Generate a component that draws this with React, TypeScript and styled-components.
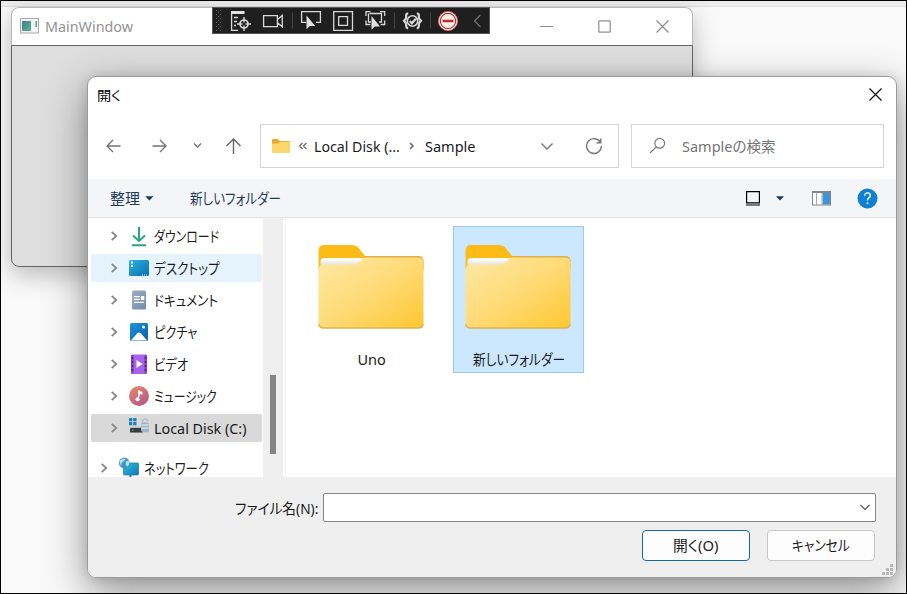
import React, { useLayoutEffect, useRef, useState } from 'react';
import styled, { createGlobalStyle } from 'styled-components';

const GlobalStyle = createGlobalStyle`
  * { box-sizing: border-box; }
  body { margin: 0; overflow: hidden; }
  svg { display: block; flex: none; }
`;

/* ---------- text that is condensed to a set width ---------- */

const FitBox = styled.span<{ $w: number; $size: number; $color: string; $ml: number }>`
  display: inline-flex;
  flex: none;
  width: ${p => p.$w}px;
  margin-left: ${p => p.$ml}px;
  font-size: ${p => p.$size}px;
  line-height: 20px;
  height: 20px;
  color: ${p => p.$color};
  white-space: pre;
`;
const FitInner = styled.span`
  flex: none;
  transform-origin: 0 50%;
  font-feature-settings: 'palt';
`;

type FitProps = { text: string; w: number; size?: number; color?: string; ml?: number };

function Fit({ text, w, size = 14.5, color = '#1b1b1b', ml = 0 }: FitProps) {
  const ref = useRef<HTMLSpanElement>(null);
  const [scale, setScale] = useState(1);
  useLayoutEffect(() => {
    if (ref.current && ref.current.offsetWidth) setScale(w / ref.current.offsetWidth);
  }, [text, w, size]);
  return (
    <FitBox $w={w} $size={size} $color={color} $ml={ml}>
      <FitInner ref={ref} style={{ transform: `scaleX(${scale})` }}>{text}</FitInner>
    </FitBox>
  );
}

/* ---------- desktop ---------- */

const Desktop = styled.div`
  position: relative;
  width: 907px;
  height: 594px;
  overflow: hidden;
  border: 1px solid #000;
  background: #f9f9f9;
  font-family: 'Noto Sans', 'Noto Sans CJK JP', sans-serif;
`;
const BackStrip = styled.div`
  height: 6px;
  background: #efecef;
  border-bottom: 1px solid #dedede;
`;

const MainWindow = styled.section`
  position: absolute;
  left: 10px;
  top: 6px;
  width: 682px;
  height: 260px;
  display: flex;
  flex-direction: column;
  border-radius: 8px;
  background: #fff;
  box-shadow: 0 8px 24px rgba(0, 0, 0, 0.25);
`;
const MainTitle = styled.header`
  height: 38px;
  flex: none;
  display: flex;
  align-items: center;
  padding: 0 23px 1px 8px;
  border: 1px solid #b8b8b8;
  border-bottom: 0;
  border-radius: 8px 8px 0 0;
`;
const Spacer = styled.div`
  flex: 1;
`;
const CaptionButtons = styled.div`
  display: flex;
  gap: 45px;
`;
const MainBody = styled.div`
  flex: 1;
  background: #dedede;
  border: 1px solid #666;
  border-radius: 0 0 8px 8px;
`;

const DebugBar = styled.div`
  position: absolute;
  left: 211px;
  top: 6px;
  width: 278px;
  height: 27px;
  background: #1f1f1f;
  border: 1px solid #555;
  display: flex;
`;

/* ---------- dialog ---------- */

const Dialog = styled.section`
  position: absolute;
  left: 86px;
  top: 75px;
  width: 810px;
  height: 502px;
  display: flex;
  flex-direction: column;
  border: 1px solid #9b9b9b;
  border-radius: 9px;
  background: #fff;
  background-clip: padding-box;
  overflow: hidden;
`;
const DialogShadow = styled.div`
  position: absolute;
  left: 86px;
  top: 75px;
  width: 810px;
  height: 502px;
  border-radius: 9px;
  box-shadow: 0 14px 42px rgba(0, 0, 0, 0.42), 0 0 12px rgba(0, 0, 0, 0.12);
`;
const DialogTitle = styled.header`
  height: 35px;
  flex: none;
  display: flex;
  align-items: center;
  padding: 0 14px 0 9px;
`;
const NavRow = styled.div`
  height: 67px;
  flex: none;
  display: flex;
  align-items: center;
  padding: 0 12px 0 17px;
`;
const Field = styled.div<{ $w: number; $ml: number; $pl: number }>`
  width: ${p => p.$w}px;
  margin-left: ${p => p.$ml}px;
  padding-left: ${p => p.$pl}px;
  height: 44px;
  border: 1px solid #d4d4d4;
  display: flex;
  align-items: center;
  flex: none;
`;
const CommandBar = styled.div`
  height: 39px;
  flex: none;
  display: flex;
  align-items: center;
  padding: 0 18px 0 22px;
  background: #f4f5f7;
  border-bottom: 1px solid #e4e4e4;
`;
const Gap = styled.div<{ $w: number }>`
  flex: none;
  width: ${p => p.$w}px;
`;
const Body = styled.div`
  display: flex;
  height: 259px;
  flex: none;
  overflow: hidden;
`;
const Tree = styled.nav`
  width: 175px;
  padding: 4px 1px 0 3px;
  display: flex;
  flex-direction: column;
  gap: 4px;
`;
const TreeItem = styled.div<{ $bg?: string; $root?: boolean }>`
  flex: none;
  height: 28px;
  display: flex;
  align-items: center;
  border-radius: 2px;
  padding-left: ${p => (p.$root ? 9 : 19)}px;
  margin-top: ${p => (p.$root ? 8 : 0)}px;
  background: ${p => p.$bg ?? 'transparent'};
`;
const ItemIcon = styled.div`
  width: 22px;
  height: 22px;
  margin: 0 4px 0 10px;
`;
const Track = styled.div`
  width: 20px;
  background: #efefef;
  padding: 157px 0 0 7px;
`;
const Thumb = styled.div`
  width: 6px;
  height: 79px;
  background: #858585;
`;
const Files = styled.div`
  flex: 1;
  display: flex;
  align-items: flex-start;
  gap: 16px;
  padding: 8px 0 0 20px;
  margin-left: 2px;
  border-left: 1px solid #f3f3f3;
`;
const Tile = styled.div<{ $selected?: boolean }>`
  width: 131px;
  height: 147px;
  display: flex;
  flex-direction: column;
  align-items: center;
  padding-top: 18px;
  gap: 20px;
  border: 1px solid ${p => (p.$selected ? '#99c9ef' : 'transparent')};
  background: ${p => (p.$selected ? '#cce8ff' : 'transparent')};
  & > svg { margin-right: 2px; }
`;
const Footer = styled.footer`
  flex: 1;
  background: #efefef;
  padding: 16px 20px 0 0;
`;
const NameRow = styled.div`
  display: flex;
  align-items: center;
  justify-content: flex-end;
`;
const Combo = styled.div`
  width: 553px;
  height: 29px;
  margin-left: 5px;
  border: 1px solid #868686;
  border-radius: 2px;
  background: #fff;
  display: flex;
  align-items: center;
  justify-content: flex-end;
  padding-right: 5px;
`;
const Buttons = styled.div`
  display: flex;
  justify-content: flex-end;
  gap: 17px;
  margin: 8px 1px 0 0;
`;
const Button = styled.button<{ $primary?: boolean }>`
  width: 108px;
  height: 31px;
  padding: 0 0 2px;
  display: flex;
  align-items: center;
  justify-content: center;
  font-family: inherit;
  background: #fdfdfd;
  border-radius: 4px;
  border: 1px solid ${p => (p.$primary ? '#1568a8' : '#c8c8c8')};
`;
const Grip = styled.svg`
  position: absolute;
  right: 2px;
  bottom: 1px;
`;

/* ---------- icons ---------- */

const CloseIcon = ({ color }: { color: string }) => (
  <svg width="13" height="13" viewBox="0 0 13 13" stroke={color} strokeWidth="1.25"><path d="M.5.5l12 12M12.5.5l-12 12" /></svg>
);

const Chevron = () => (
  <svg width="8" height="10" viewBox="0 0 8 10" fill="none" stroke="#858585" strokeWidth="1.700"><path d="M1.700.8L6.300 5 1.700 9.200" /></svg>
);

const AppIcon = () => (
  <svg width="19" height="16" viewBox="0 0 19 16">
    <defs><linearGradient id="app" x1="0" y1="0" x2="1" y2="1"><stop stopColor="#3d7f96" /><stop offset="1" stopColor="#5fb489" /></linearGradient></defs>
    <rect x=".5" y=".5" width="18" height="14.5" fill="#f4f4f4" stroke="#a6abae" />
    <rect x="2" y="3" width="9" height="10" fill="url(#app)" />
    <rect x="15.5" y="3" width="1.3" height="6" fill="#5b8796" />
  </svg>
);

const DebugIcons = () => (
  <svg width="276" height="25" viewBox="213 8 276 25" fill="none" stroke="#d8d8d8" strokeWidth="1.3">
    <g stroke="#6b6b6b" strokeWidth="1.1" strokeDasharray="1 3">
      <path d="M216.500 10v22M220.500 10v22" /><path d="M218.500 12v20" />
    </g>
    <path d="M231 12.500h13.500" stroke="#e2e2e2" strokeWidth="3" />
    <path d="M231.600 13v17.300h6.500M234 17.500h4M234 21.500h3M234 25.500h2" />
    <circle cx="244" cy="24" r="4" strokeWidth="1.700" />
    <path d="M244 17v5.500M244 25.500v5.500M237 24h5.500M245.500 24h5.500" strokeWidth="1.400" />
    <path d="M263.600 15.600h13.800v11h-13.800zM277.500 19.500l4.800-4v11.300l-4.800-4" />
    <path d="M292.500 12.500v16M394.500 12.500v16M430.500 12.500v16" stroke="#464646" strokeWidth="1" />
    <path d="M306 22.300h-4.400V11.700h18.800v10.600h-4.500" />
    <path d="M306.500 15.500v13.700l3.400-3.300h5.300z" fill="#e2e2e2" stroke="none" />
    <path d="M333.700 11.700h18.800v18.600h-18.800zM338.700 16.700h8.800v8.700h-8.800z" />
    <path d="M369.500 13.500h12v8.500h-2.500M371 22h-2.500v-8.500M366 16v-4.300h4.500M380 11.700h4.700V16M384.700 20.500v4h-4M366 20.500v4h4.500" />
    <path d="M371.500 16v13.700l3.300-3.200h5.200z" fill="#e2e2e2" stroke="none" />
    <circle cx="412.500" cy="21" r="5.200" strokeWidth="1.600" />
    <path d="M409.700 21l2.200 2.300 4-4.500" strokeWidth="2.200" />
    <path d="M408.200 13.300c-3 0-1.700 3-2.200 5.200l-2 2.200 2 2.500c.5 2-.8 5 2.200 5.200M416.800 13.300c3 0 1.700 3 2.200 5.200l2 2.200-2 2.500c-.5 2 .8 5-2.200 5.200" strokeWidth="2.200" />
    <circle cx="448" cy="21" r="9.500" fill="#fff" stroke="#d96b62" strokeWidth="1" />
    <circle cx="448" cy="21" r="7.700" fill="#fdf0ef" stroke="#b63a32" strokeWidth="1.200" />
    <path d="M442.500 21h11" stroke="#b5332b" strokeWidth="2.600" />
    <path d="M480.500 15l-6 6 6 6" stroke="#747474" strokeWidth="1.200" />
  </svg>
);

const Folder = () => (
  <svg width="106" height="84" viewBox="0 0 106 84">
    <defs>
      <linearGradient id="fold" x1="0" y1="0" x2="1" y2="1"><stop stopColor="#ffe9a6" /><stop offset=".5" stopColor="#ffdb77" /><stop offset="1" stopColor="#ffc62f" /></linearGradient>
      <linearGradient id="paper" x1="0" y1="0" x2="0" y2="1"><stop offset=".1" stopColor="#fff" /><stop offset=".75" stopColor="#dedbd0" /></linearGradient>
    </defs>
    <path d="M.5 24V5a5 5 0 015-5H33.500q4.500 0 7 2.800L47 11H100.500a5 5 0 015 5v10z" fill="#fcbb16" />
    <path d="M45 11.200H100.500a5 5 0 015 4.800v7z" fill="#d9ac4f" />
    <path d="M2.500 24V16.500q0-3.500 4-3.500H46l-6 8H8z" fill="url(#paper)" />
    <path d="M5.500 19.500H34q4.500 0 7-2.500l4-3.300q1.700-1.300 4-1.300H100.500a5 5 0 015 5V78a5 5 0 01-5 5H5.500a5 5 0 01-5-5V24.500a5 5 0 015-5z" fill="url(#fold)" />
    <path d="M.7 79q.8 4 4.800 4H100.500q4 0 4.800-4" fill="none" stroke="#e0b24d" strokeWidth="1.300" />
  </svg>
);

const SmallFolder = () => (
  <svg width="18" height="14" viewBox="0 0 18 14">
    <path d="M0 1.300Q0 0 1.300 0H5.500L7.500 2H16.700Q18 2 18 3.300V8H0z" fill="#e6a92c" />
    <path d="M0 4.500h6.500l1.700-1.700H18v9.900q0 1.300-1.300 1.300H1.300Q0 14 0 12.700z" fill="#fcd768" />
  </svg>
);

const icons: Record<string, React.ReactNode> = {
  download: (
    <g fill="none" stroke="#2ba386" strokeWidth="2"><path d="M11 2v14M5 10.500l6 5.500 6-5.500M4 20.300h14" /></g>
  ),
  desktop: (
    <>
      <defs><linearGradient id="desk" x1="0" y1="0" x2="1" y2="1"><stop stopColor="#2bb4dc" /><stop offset="1" stopColor="#0e6cb0" /></linearGradient></defs>
      <rect x="1" y="3" width="20" height="16" rx="1.500" fill="url(#desk)" />
      <path d="M3 5.500h2M3 9h2" stroke="#fff" strokeWidth="1.800" /><path d="M14 18h5" stroke="#d5edfb" strokeDasharray="1 1" />
    </>
  ),
  document: (
    <>
      <defs><linearGradient id="doc" x1="0" y1="0" x2="1" y2="1"><stop stopColor="#9bb0c8" /><stop offset="1" stopColor="#748aa6" /></linearGradient></defs>
      <rect x="4" y="1.500" width="14" height="19" rx="1.500" fill="url(#doc)" />
      <path d="M6 7.700h6M6 10.300h6M6 13.300h10" stroke="#fff" strokeWidth="1.300" /><rect x="13" y="7" width="3.300" height="4" fill="#fff" />
    </>
  ),
  picture: (
    <>
      <defs><linearGradient id="pic" x1="0" y1="0" x2="1" y2="1"><stop stopColor="#1a94df" /><stop offset="1" stopColor="#0b5ea9" /></linearGradient></defs>
      <rect x="2" y="2" width="18" height="18" rx="1.500" fill="url(#pic)" />
      <path d="M2.800 19.500l6.600-7.300q1.600-1.500 3.200 0l6.600 7.300z" fill="#fff" /><circle cx="15.500" cy="6" r="1.500" fill="#fff" />
    </>
  ),
  video: (
    <>
      <rect x="3" y="1.500" width="16" height="19.500" rx="1.500" fill="#a564ea" />
      <path d="M4.300 2v18.500M17.700 2v18.500" stroke="#8744cd" strokeWidth="2.600" />
      <path d="M4.500 4v16M17.500 4v16" stroke="#4f1c94" strokeWidth="1.500" strokeDasharray="2 2" />
      <path d="M8.500 7v8l6-4z" fill="#fff" />
    </>
  ),
  music: (
    <>
      <defs><linearGradient id="mus" x1="0" y1="0" x2=".6" y2="1"><stop stopColor="#e98d62" /><stop offset="1" stopColor="#b65a8d" /></linearGradient></defs>
      <circle cx="11" cy="11" r="10" fill="url(#mus)" />
      <circle cx="9.500" cy="14.200" r="2" fill="#fff" /><path d="M10.700 14V5.500q1 1.500 3.300 1.800v1.800q-1.300 0-2.100-.7" fill="#fff" stroke="#fff" />
    </>
  ),
  disk: (
    <>
      <path d="M1 1h3.300v3.200H1zM5.200 1h3.300v3.200H5.200zM1 5.100h3.300v3.200H1zM5.200 5.100h3.300v3.200H5.200z" fill="#1781c4" />
      <path d="M4 9.500h15l2 2v4H2v-4z" fill="#b8bcbf" /><rect x="2" y="11" width="13" height="4.500" rx=".7" fill="#353d42" /><rect x="4" y="12.700" width="1.500" height="1" fill="#5bd28b" />
      <path d="M14.500 6V4.800q0-2.800 2.600-2.800t2.600 2.300" stroke="#b5c3cb" strokeWidth="1.600" fill="none" />
      <rect x="13" y="5.500" width="8" height="9.500" rx="2" fill="#9db7c9" /><path d="M13.500 8h7M13.500 11h7" stroke="#e7f1f6" />
    </>
  ),
  network: (
    <>
      <defs><linearGradient id="net" x1="0" y1="0" x2="1" y2="1"><stop stopColor="#2fc0df" /><stop offset="1" stopColor="#1277b4" /></linearGradient></defs>
      <path d="M12.500 18v3.500" stroke="#1e7baa" strokeWidth="2" />
      <rect x="5.500" y="6" width="15" height="12" rx="1" fill="url(#net)" stroke="#167cac" strokeWidth=".7" />
      <circle cx="6.300" cy="6" r="5.400" fill="#4696c0" /><path d="M2 3.500Q5.500 .5 7.500 2 6.500 4 4.500 5t-1 4Q1 7 2 3.500zM8.500 4l2.500-.5Q12 7 9.500 9.500 6.500 8 8.500 4z" fill="#b7e1ed" />
    </>
  ),
};

const tree = [
  { icon: 'download', text: 'ダウンロード', w: 65 },
  { icon: 'desktop', text: 'デスクトップ', w: 66, bg: '#e5f3fd' },
  { icon: 'document', text: 'ドキュメント', w: 64 },
  { icon: 'picture', text: 'ピクチャ', w: 43 },
  { icon: 'video', text: 'ビデオ', w: 34 },
  { icon: 'music', text: 'ミュージック', w: 63 },
  { icon: 'disk', text: 'Local Disk (C:)', w: 93, bg: '#d9d9d9' },
  { icon: 'network', text: 'ネットワーク', w: 65, root: true },
];

export default function App() {
  return (
    <Desktop>
      <GlobalStyle />
      <BackStrip />
      <MainWindow>
        <MainTitle>
          <AppIcon />
          <Fit text="MainWindow" w={88} color="#929292" ml={6} />
          <Spacer />
          <CaptionButtons>
            <svg width="13" height="13" viewBox="0 0 13 13" stroke="#8e8e8e"><path d="M0 6.500h13" /></svg>
            <svg width="13" height="13" viewBox="0 0 13 13" fill="none" stroke="#8e8e8e" strokeWidth="1.200"><rect x=".8" y=".8" width="11.400" height="11.400" rx=".7" /></svg>
            <CloseIcon color="#8e8e8e" />
          </CaptionButtons>
        </MainTitle>
        <MainBody />
      </MainWindow>
      <DialogShadow />
      <DebugBar><DebugIcons /></DebugBar>

      <Dialog>
        <DialogTitle>
          <Fit text="開く" w={24} size={13} color="#000" />
          <Spacer />
          <CloseIcon color="#111" />
        </DialogTitle>

        <NavRow>
          <svg width="17" height="16" viewBox="0 0 17 16" fill="none" stroke="#737373" strokeWidth="1.300"><path d="M15.500 8H2M8 2L2 8l6 6" /></svg>
          <Gap $w={29} />
          <svg width="17" height="16" viewBox="0 0 17 16" fill="none" stroke="#737373" strokeWidth="1.300"><path d="M1.500 8H15M9 2l6 6-6 6" /></svg>
          <Gap $w={25} />
          <svg width="9" height="8" viewBox="0 0 9 8" fill="none" stroke="#737373" strokeWidth="1.400"><path d="M1 1.500L4.500 5 8 1.500" /></svg>
          <Gap $w={23} />
          <svg width="17" height="16" viewBox="0 0 17 16" fill="none" stroke="#666" strokeWidth="1.400"><path d="M8.500 16V1M1.500 8l7-7 7 7" /></svg>
          <Field $w={359} $ml={18} $pl={11}>
            <SmallFolder />
            <Gap $w={8} />
            <svg width="10" height="8" viewBox="0 0 10 8" fill="none" stroke="#666" strokeWidth="1.200"><path d="M4.500 1l-3 3 3 3M8.500 1l-3 3 3 3" /></svg>
            <Fit text="Local Disk (..." w={86} ml={6} />
            <Gap $w={9} />
            <svg width="6" height="10" viewBox="0 0 6 10" fill="none" stroke="#666" strokeWidth="1.500"><path d="M1 2l3 3-3 3" /></svg>
            <Fit text="Sample" w={51} ml={10} />
            <Gap $w={64} />
            <svg width="14" height="8" viewBox="0 0 14 8" fill="none" stroke="#777" strokeWidth="1.400"><path d="M1.500 1.500L7 7l5.500-5.500" /></svg>
            <Gap $w={31} />
            <svg width="18" height="18" viewBox="0 0 18 18" fill="none" stroke="#777" strokeWidth="1.400"><path d="M15.500 5.500A7.400 7.400 0 1016.400 9M15.800 1.500v4.200h-4.200" /></svg>
          </Field>
          <Field $w={253} $ml={12} $pl={17}>
            <svg width="17" height="17" viewBox="0 0 17 17" fill="none" stroke="#777" strokeWidth="1.200"><circle cx="10.700" cy="6.300" r="4.900" /><path d="M7.200 9.800L1 16" /></svg>
            <Fit text="Sampleの検索" w={93} color="#747474" ml={16} />
          </Field>
        </NavRow>

        <CommandBar>
          <Fit text="整理" w={30} color="#1e395b" />
          <Gap $w={5} />
          <svg width="9" height="5" viewBox="0 0 9 5"><path d="M.3.300h8.200L4.400 4.600z" fill="#1e395b" /></svg>
          <Fit text="新しいフォルダー" w={91} color="#1e395b" ml={36} />
          <Spacer />
          <svg width="14" height="15" viewBox="0 0 14 15" fill="none" stroke="#000" strokeWidth="1.200"><path d="M.6.600h12.800v11.300H.6zM0 14h14" /></svg>
          <Gap $w={16} />
          <svg width="8" height="5" viewBox="0 0 8 5"><path d="M0 .300h8L4 4.500z" fill="#1e395b" /></svg>
          <Gap $w={28} />
          <svg width="19" height="15" viewBox="0 0 19 15" fill="none" stroke="#858585">
            <rect x=".5" y=".5" width="18" height="13.500" fill="#fff" /><rect x="10.500" y="2" width="7.500" height="11.500" fill="#3d95dc" stroke="none" /><path d="M0 1h19" strokeWidth="2" /><path d="M4.500 2v12M10 2v12" stroke="#aaa" />
          </svg>
          <Gap $w={26} />
          <svg width="21" height="21" viewBox="0 0 21 21">
            <circle cx="10.500" cy="10.500" r="10" fill="#0f80d2" />
            <path d="M7.700 7.800q0-2.900 2.900-2.900 2.700 0 2.700 2.500 0 1.600-1.500 2.500-1.300.8-1.300 2.500" fill="none" stroke="#fff" strokeWidth="1.400" /><circle cx="10.500" cy="15.200" r=".95" fill="#fff" />
          </svg>
        </CommandBar>

        <Body>
          <Tree>
            {tree.map(item => (
              <TreeItem key={item.icon} $bg={item.bg} $root={item.root}>
                <Chevron />
                <ItemIcon><svg width="22" height="22" viewBox="0 0 22 22">{icons[item.icon]}</svg></ItemIcon>
                <Fit text={item.text} w={item.w} />
              </TreeItem>
            ))}
          </Tree>
          <Track><Thumb /></Track>
          <Files>
            <Tile><Folder /><Fit text="Uno" w={28} /></Tile>
            <Tile $selected><Folder /><Fit text="新しいフォルダー" w={92} /></Tile>
          </Files>
        </Body>

        <Footer>
          <NameRow>
            <Fit text="ファイル名(N):" w={83} />
            <Combo>
              <svg width="10" height="7" viewBox="0 0 10 7" fill="none" stroke="#555" strokeWidth="1.100"><path d="M.5 1L5 5.500 9.500 1" /></svg>
            </Combo>
          </NameRow>
          <Buttons>
            <Button $primary><Fit text="開く(O)" w={46} /></Button>
            <Button><Fit text="キャンセル" w={58} /></Button>
          </Buttons>
        </Footer>
        <Grip width="12" height="12" viewBox="0 0 12 12">
          <path d="M8 0h3v3H8zM4 4h3v3H4zM8 4h3v3H8zM0 8h3v3H0zM4 8h3v3H4zM8 8h3v3H8z" fill="#b8b8b8" />
        </Grip>
      </Dialog>
    </Desktop>
  );
}
